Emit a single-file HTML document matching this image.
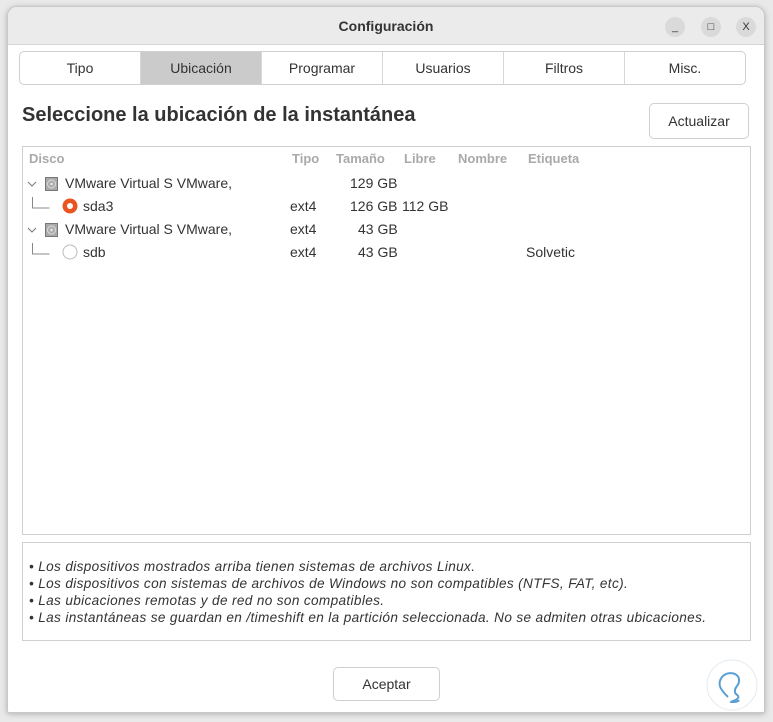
<!DOCTYPE html>
<html><head><meta charset="utf-8"><style>
*{margin:0;padding:0;box-sizing:border-box}
body{width:773px;height:722px;background:#e9e9e9;font-family:"Liberation Sans",sans-serif;color:#333;position:relative;overflow:hidden}
.win{position:absolute;left:7px;top:6px;width:758px;height:707px;background:#fff;border:1px solid #c8c8c8;border-radius:10px 10px 2px 2px;box-shadow:0 1px 6px rgba(0,0,0,.25);overflow:hidden}
.title{height:38px;background:#ebebeb;border-bottom:1px solid #d4d4d4;text-align:center;font-weight:bold;font-size:14px;line-height:38px;color:#333}
.wb{position:absolute;top:10px;width:20px;height:20px;border-radius:50%;background:#dadada;font-size:11px;text-align:center;line-height:20px;color:#333}
.tabs{position:absolute;left:11px;top:44px;width:727px;height:34px;border:1px solid #cfcfcf;border-radius:5px;display:flex;overflow:hidden}
.tabs div{flex:1;text-align:center;line-height:32px;font-size:14px;border-right:1px solid #d8d8d8}
.tabs div:last-child{border-right:0}
.tabs .sel{background:#cbcbcb}
h1{position:absolute;left:14px;top:97px;font-size:20px;font-weight:bold;color:#333}
.btn{position:absolute;border:1px solid #cfcfcf;border-radius:5px;text-align:center;font-size:14px;background:#fff}
.tree{position:absolute;left:14px;top:139px;width:729px;height:389px;border:1px solid #d0d0d0}
.t{position:absolute;font-size:14px;white-space:nowrap}
.h{color:#a9a9a9;font-weight:bold;font-size:13px}
.notes{position:absolute;left:14px;top:535px;width:729px;height:99px;border:1px solid #d0d0d0;font-style:italic;font-size:13.6px;line-height:17px;padding:15px 0 0 6px;color:#333;letter-spacing:0.35px;white-space:nowrap}
</style></head><body>
<div class="win">
<div class="title">Configuración</div>
<div class="wb" style="left:657px">_</div>
<div class="wb" style="left:693px">□</div>
<div class="wb" style="left:728px">X</div>
<div class="tabs"><div>Tipo</div><div class="sel">Ubicación</div><div>Programar</div><div>Usuarios</div><div>Filtros</div><div>Misc.</div></div>
<h1>Seleccione la ubicación de la instantánea</h1>
<div class="btn" style="left:641px;top:96px;width:100px;height:36px;line-height:34px">Actualizar</div>
<div class="tree">
<div class="t h" style="left:6px;top:4px">Disco</div>
<div class="t h" style="left:269px;top:4px">Tipo</div>
<div class="t h" style="left:313px;top:4px">Tamaño</div>
<div class="t h" style="left:381px;top:4px">Libre</div>
<div class="t h" style="left:435px;top:4px">Nombre</div>
<div class="t h" style="left:505px;top:4px">Etiqueta</div>
<svg style="position:absolute;left:0;top:24px" width="80" height="100">
<path d="M5 11l4 4 4-4" fill="none" stroke="#777" stroke-width="1"/>
<rect x="22.5" y="6.5" width="12" height="13" fill="#aaa" stroke="#777"/><circle cx="28.5" cy="13" r="4" fill="none" stroke="#ddd"/><circle cx="28.5" cy="13" r="1.5" fill="#ddd"/>
<path d="M9.5 26v11h17" fill="none" stroke="#888"/>
<circle cx="47" cy="35" r="7.5" fill="#e95420"/><circle cx="47" cy="35" r="3" fill="#fff"/>
<path d="M5 57l4 4 4-4" fill="none" stroke="#777" stroke-width="1"/>
<rect x="22.5" y="52.5" width="12" height="13" fill="#aaa" stroke="#777"/><circle cx="28.5" cy="59" r="4" fill="none" stroke="#ddd"/><circle cx="28.5" cy="59" r="1.5" fill="#ddd"/>
<path d="M9.5 72v11h17" fill="none" stroke="#888"/>
<circle cx="47" cy="81" r="7" fill="#fff" stroke="#bbb"/>
</svg>
<div class="t" style="left:42px;top:28px">VMware Virtual S VMware,</div>
<div class="t" style="left:327px;top:28px">129 GB</div>
<div class="t" style="left:60px;top:51px">sda3</div>
<div class="t" style="left:267px;top:51px">ext4</div>
<div class="t" style="left:327px;top:51px">126 GB</div>
<div class="t" style="left:379px;top:51px">112 GB</div>
<div class="t" style="left:42px;top:74px">VMware Virtual S VMware,</div>
<div class="t" style="left:267px;top:74px">ext4</div>
<div class="t" style="left:335px;top:74px">43 GB</div>
<div class="t" style="left:60px;top:97px">sdb</div>
<div class="t" style="left:267px;top:97px">ext4</div>
<div class="t" style="left:335px;top:97px">43 GB</div>
<div class="t" style="left:503px;top:97px">Solvetic</div>
</div>
<div class="notes">• Los dispositivos mostrados arriba tienen sistemas de archivos Linux.<br>• Los dispositivos con sistemas de archivos de Windows no son compatibles (NTFS, FAT, etc).<br>• Las ubicaciones remotas y de red no son compatibles.<br>• Las instantáneas se guardan en /timeshift en la partición seleccionada. No se admiten otras ubicaciones.</div>
<div class="btn" style="left:325px;top:660px;width:107px;height:34px;line-height:32px">Aceptar</div>
<svg style="position:absolute;left:698px;top:652px" width="52" height="52"><circle cx="26" cy="26" r="25" fill="#fff" stroke="#e4eaef"/><path d="M22 38c-6-6-12-12-6-20 6-7 18-4 17 4 0 5-5 6-4 11 0 3 5 3 3 6-2 3-7 3-7 4 3 0 7 0 8-2" fill="none" stroke="#5a9fd4" stroke-width="2"/></svg>
</div>
</body></html>
